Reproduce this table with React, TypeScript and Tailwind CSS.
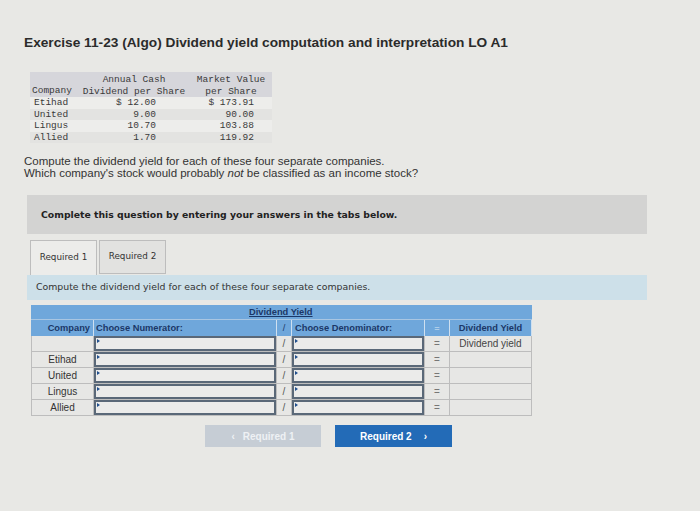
import React from "react";

const companies = [
  { name: "Etihad", dividend: "$ 12.00", market: "$ 173.91" },
  { name: "United", dividend: "9.00", market: "90.00" },
  { name: "Lingus", dividend: "10.70", market: "103.88" },
  { name: "Allied", dividend: "1.70", market: "119.92" },
];

function Marker() {
  return (
    <span className="absolute left-[1px] top-[1px] h-0 w-0 border-y-[2px] border-l-[3px] border-y-transparent border-l-[#1f4e8c]" />
  );
}

function InputCell() {
  return (
    <div className="relative h-full border-2 border-[#5a6878] bg-[#ebebea]">
      <Marker />
    </div>
  );
}

function AnswerRow({ company, yieldLabel }: { company: string; yieldLabel?: string }) {
  const cell = "h-[16px] border-b border-r border-[#bdbdbd] bg-[#e7e7e5]";
  return (
    <>
      <div className={`${cell} border-l text-center leading-[15px] text-[#333]`}>{company}</div>
      <div className={`${cell} p-0`}>
        <InputCell />
      </div>
      <div className={`${cell} text-center leading-[15px] text-[#555]`}>/</div>
      <div className={`${cell} p-0`}>
        <InputCell />
      </div>
      <div className={`${cell} text-center leading-[15px] text-[#777]`}>=</div>
      <div className={`${cell} text-center leading-[15px] text-[#444]`}>{yieldLabel}</div>
    </>
  );
}

export default function App() {
  return (
    <div className="relative h-[511px] w-[700px] overflow-hidden bg-[#e8e8e5] font-['Liberation_Sans',Arial,sans-serif]">
      <div className="flex flex-col pl-[24px] pt-[33px]">
        {/* Title */}
        <h1 className="text-[13.7px] font-bold leading-[19px] text-[#2b2b2b]">
          Exercise 11-23 (Algo) Dividend yield computation and interpretation LO A1
        </h1>

        {/* Given data */}
        <table className="ml-[6px] mt-[20px] w-[242px] border-collapse font-['Liberation_Mono',monospace] text-[9.5px] leading-[11.5px] text-[#3a3a3a]">
          <thead>
            <tr className="bg-[#d6d6db]">
              <th className="w-[48px] pb-[1px] pl-[2px] text-left align-bottom font-normal">Company</th>
              <th className="w-[112px] pt-[2px] text-center align-bottom font-normal">
                Annual Cash
                <br />
                Dividend per Share
              </th>
              <th className="pt-[2px] text-center align-bottom font-normal">
                Market Value
                <br />
                per Share
              </th>
            </tr>
          </thead>
          <tbody>
            {companies.map((c, i) => (
              <tr key={c.name} className={i % 2 === 0 ? "bg-[#ededeb]" : "bg-[#e3e3e1]"}>
                <td className="pl-[4px]">{c.name}</td>
                <td className="pr-[34px] text-right">{c.dividend}</td>
                <td className="pr-[18px] text-right">{c.market}</td>
              </tr>
            ))}
          </tbody>
        </table>

        {/* Question */}
        <p className="mt-[12px] text-[11.5px] leading-[12px] text-[#333]">
          Compute the dividend yield for each of these four separate companies.
          <br />
          Which company's stock would probably <i>not</i> be classified as an income stock?
        </p>

        {/* Instruction box */}
        <div className="ml-[3px] mt-[16px] flex h-[39px] w-[620px] items-center bg-[#d3d3d2] pl-[14px]">
          <span className="font-['DejaVu_Sans',Verdana,sans-serif] text-[9.3px] font-bold text-[#222]">
            Complete this question by entering your answers in the tabs below.
          </span>
        </div>

        {/* Tabs */}
        <div className="ml-[6px] mt-[6px] flex gap-[2px] font-['DejaVu_Sans',Verdana,sans-serif] text-[8.8px] text-[#333]">
          <div className="flex h-[35px] w-[67px] items-center justify-center border border-b-0 border-[#bdbdbd] bg-[#ececea]">
            Required 1
          </div>
          <div className="flex h-[34px] w-[67px] items-center justify-center border border-[#bdbdbd] bg-[#e2e2e0]">
            Required 2
          </div>
        </div>

        {/* Blue prompt */}
        <div className="ml-[3px] flex h-[25px] w-[620px] items-center bg-[#cde0e9] pl-[9px] font-['DejaVu_Sans',Verdana,sans-serif] text-[9.35px] text-[#333]">
          Compute the dividend yield for each of these four separate companies.
        </div>

        {/* Answer table */}
        <div className="ml-[7px] mt-[5px] grid w-[501px] grid-cols-[63px_183px_15px_133px_25px_82px] text-[10px]">
          <div className="col-span-6 h-[15px] border-b border-[#a9c6e2] bg-[#6fa7db]">
            <div className="pl-[218px] text-[9.3px] font-bold leading-[15px] text-[#1b3767] underline">
              Dividend Yield
            </div>
          </div>
          {[
            ["Company", "pr-[3px] text-right"],
            ["Choose Numerator:", "pl-[2px] text-left"],
            ["/", "text-center font-normal"],
            ["Choose Denominator:", "pl-[3px] text-left"],
            ["=", "text-center font-normal text-[#dbe7f3]"],
            ["Dividend Yield", "text-center"],
          ].map(([label, cls]) => (
            <div
              key={label}
              className={`h-[16px] border-r border-[#cfe0f0] bg-[#6fa7db] text-[9.3px] font-bold leading-[16px] text-[#1b3767] ${cls}`}
            >
              {label}
            </div>
          ))}
          <AnswerRow company="" yieldLabel="Dividend yield" />
          {companies.map((c) => (
            <AnswerRow key={c.name} company={c.name} />
          ))}
        </div>

        {/* Navigation */}
        <div className="ml-[181px] mt-[9px] flex gap-[14px] text-[10px] font-bold">
          <div className="flex h-[22px] w-[116px] items-center justify-center gap-[8px] bg-[#c6cdd5] text-[#eef1f4]">
            <span>&lsaquo;</span>
            <span>Required 1</span>
          </div>
          <div className="flex h-[22px] w-[117px] items-center justify-center gap-[12px] bg-[#236bb7] text-white">
            <span>Required 2</span>
            <span>&rsaquo;</span>
          </div>
        </div>
      </div>
    </div>
  );
}
